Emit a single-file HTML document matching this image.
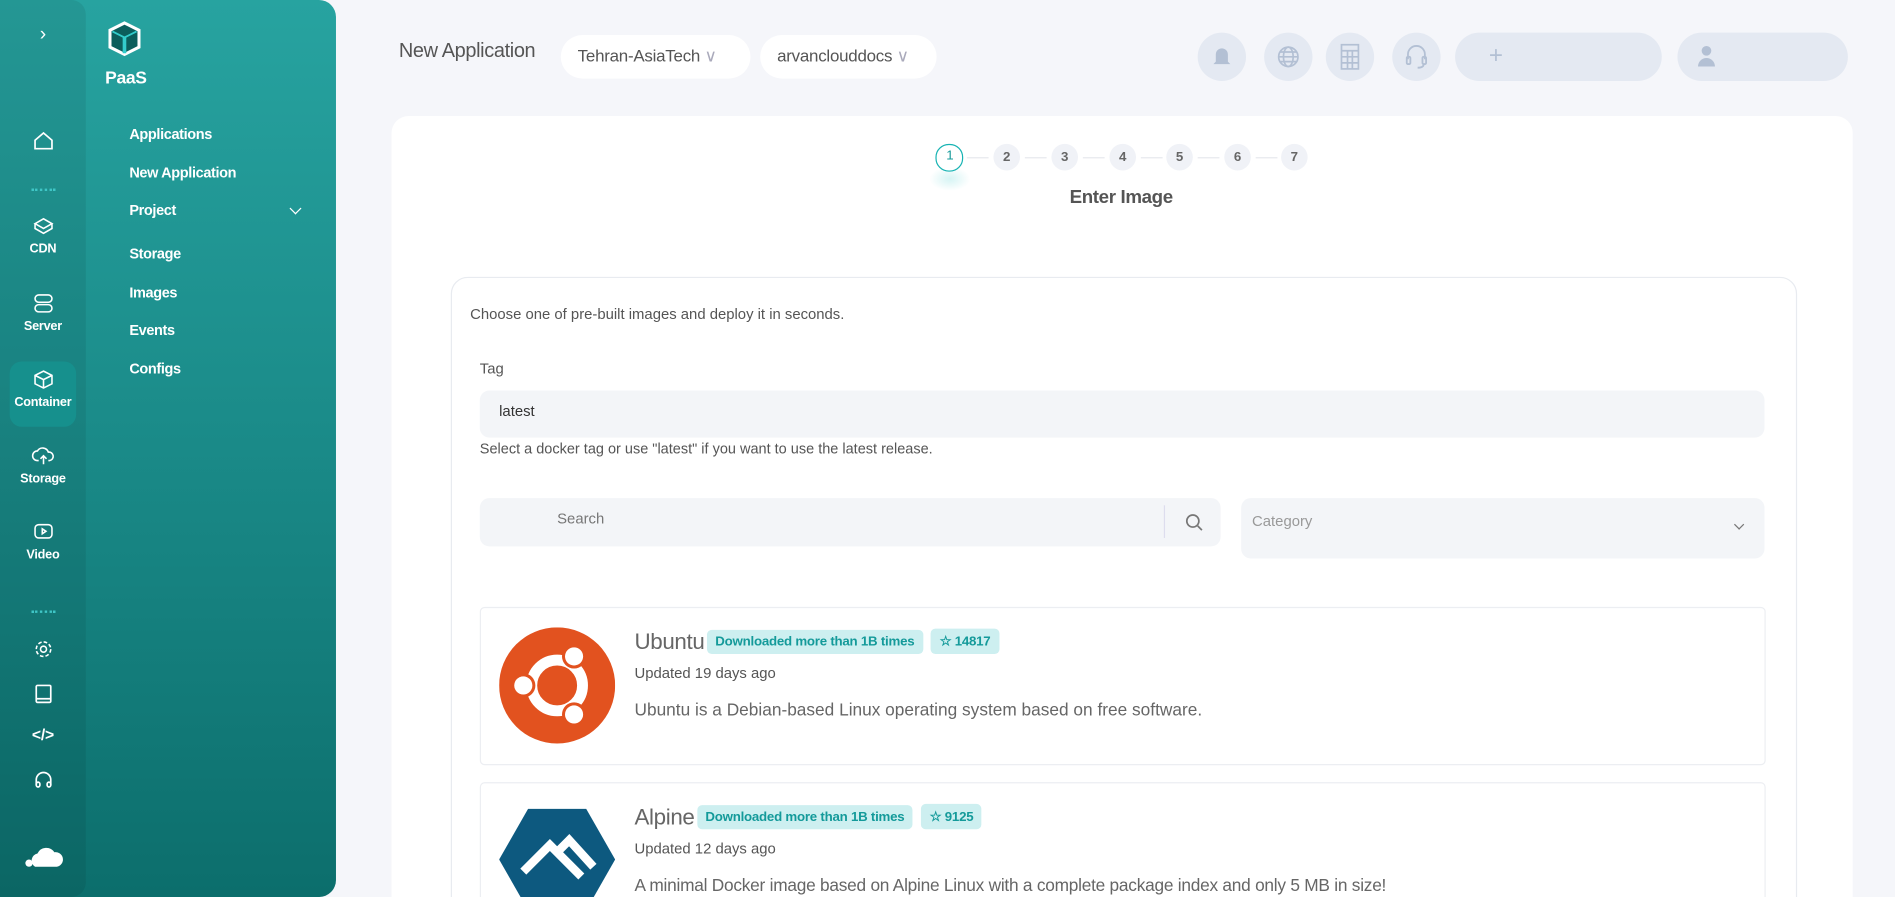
<!DOCTYPE html>
<html><head><meta charset="utf-8"><style>
html,body{margin:0;padding:0;width:1895px;height:897px;overflow:hidden;background:#f5f6fa;font-family:"Liberation Sans",sans-serif}
#w{position:absolute;left:0;top:0;width:1568px;height:742px;overflow:hidden;transform:scale(1.20855,1.2089);transform-origin:0 0;background:#f5f6fa}
.side{position:absolute;left:0;top:0;width:278px;height:742px;border-radius:0 14px 14px 0;background:linear-gradient(180deg,#27a3a0 0%,#1a8a88 50%,#0c6e6c 100%)}
.rail{position:absolute;left:0;top:0;width:71px;height:742px;background:rgba(0,0,0,0.07);border-radius:0 12px 12px 0}
.ri{position:absolute;left:0;width:71px;text-align:center;color:#fff;font-size:10.5px;font-weight:bold;letter-spacing:-0.2px}
.ri svg{display:block;margin:0 auto 4px}
.menu{position:absolute;left:107px;color:#fff;font-size:12px;font-weight:bold;letter-spacing:-0.3px}
.dots{position:absolute;left:26px;width:20px;border-top:2px dotted #3fc6c6}
.pill{position:absolute;background:#fff;border-radius:18px;height:36px;top:29px;font-size:14px;color:#555;line-height:34px;padding-left:14px;box-sizing:border-box;letter-spacing:-0.2px}
.ic{position:absolute;top:27px;width:40px;height:40px;border-radius:20px;background:#e4e9f2}
.card{position:absolute;left:324px;top:96px;width:1209px;height:660px;background:#fff;border-radius:14px}
.st{position:absolute;top:119px;width:22px;height:22px;border-radius:11px;background:#f0f2f7;font-size:11px;color:#666;text-align:center;line-height:22px;font-weight:bold}
.ln{position:absolute;top:130px;width:18px;border-top:1px solid #e6e8ee}
.in{position:absolute;left:373px;top:229px;width:1112px;height:530px;border:1px solid #e8ebf0;border-radius:14px}
.t{position:absolute;font-size:12.3px;color:#555}
.item{position:absolute;left:397px;width:1062px;border:1px solid #eceef2;border-radius:4px;background:#fff}
.badge{display:inline-block;background:#cdeff0;color:#149a9a;font-size:11px;font-weight:bold;padding:4px 7px;border-radius:4px;vertical-align:3px;margin-left:2px;letter-spacing:-0.2px}
</style></head><body><div id="w">
<div class="side"><div class="rail"></div>
<div class="ri" style="top:20px;font-size:16px;font-weight:normal">&#x203A;</div>
<div class="ri" style="top:107px"><svg width="18" height="18" viewBox="0 0 18 18" fill="none" stroke="#fff" stroke-width="1.4"><path d="M2 9L9 3l7 6v7H2z"/></svg></div>
<div class="dots" style="top:156px"></div>
<div class="ri" style="top:178px"><svg width="20" height="18" viewBox="0 0 20 18" fill="none" stroke="#fff" stroke-width="1.3"><path d="M3 7l7-4 7 4-7 4z M3 7v4l7 4 7-4V7"/></svg>CDN</div>
<div class="ri" style="top:242px"><svg width="18" height="18" viewBox="0 0 18 18" fill="none" stroke="#fff" stroke-width="1.3"><rect x="2" y="2" width="14" height="6" rx="3"/><rect x="2" y="10" width="14" height="6" rx="3"/></svg>Server</div>
<div style="position:absolute;left:8px;top:299px;width:55px;height:54px;border-radius:10px;background:#16908d"></div>
<div class="ri" style="top:305px"><svg width="18" height="18" viewBox="0 0 18 18" fill="none" stroke="#fff" stroke-width="1.3"><path d="M9 2l7 3.5v7L9 16l-7-3.5v-7z M2 5.5L9 9l7-3.5 M9 9v7"/></svg>Container</div>
<div class="ri" style="top:368px"><svg width="20" height="18" viewBox="0 0 20 18" fill="none" stroke="#fff" stroke-width="1.3"><path d="M6 13H5a4 4 0 010-8 5 5 0 019 1 3.5 3.5 0 011 7h-1 M10 16V9 M7.5 11.5L10 9l2.5 2.5"/></svg>Storage</div>
<div class="ri" style="top:431px"><svg width="18" height="18" viewBox="0 0 18 18" fill="none" stroke="#fff" stroke-width="1.3"><rect x="2" y="3" width="14" height="11" rx="3"/><path d="M8 6.5v4l3-2z"/></svg>Video</div>
<div class="dots" style="top:505px"></div>
<div class="ri" style="top:528px"><svg width="18" height="18" viewBox="0 0 18 18" fill="none" stroke="#fff" stroke-width="1.3"><circle cx="9" cy="9" r="2.5"/><circle cx="9" cy="9" r="6" stroke-dasharray="3 1.7"/></svg></div>
<div class="ri" style="top:565px"><svg width="18" height="18" viewBox="0 0 18 18" fill="none" stroke="#fff" stroke-width="1.4"><rect x="3" y="2" width="12" height="14" rx="1"/><path d="M3 13h12"/></svg></div>
<div class="ri" style="top:600px;font-size:13px">&lt;/&gt;</div>
<div class="ri" style="top:636px"><svg width="18" height="18" viewBox="0 0 18 18" fill="none" stroke="#fff" stroke-width="1.4"><path d="M3 13V9a6 6 0 0112 0v4"/><rect x="3" y="11" width="3" height="4" rx="1.5"/><rect x="12" y="11" width="3" height="4" rx="1.5"/></svg></div>
<div class="ri" style="top:696px"><svg width="34" height="24" viewBox="0 0 34 24"><circle cx="5" cy="18" r="3" fill="#fff"/><path d="M10 21a6 6 0 012-11 8 8 0 0114-1 6 6 0 012 12z" fill="#fff"/></svg></div>
<svg style="position:absolute;left:89px;top:17px" width="28" height="30" viewBox="0 0 28 30"><path d="M14 2l12 6v14l-12 6-12-6V8z" fill="#0c5e5c" stroke="#fff" stroke-width="2.5"/><path d="M4 9l10 5 10-5" fill="none" stroke="#3cc" stroke-width="1.5"/><path d="M14 14v13" stroke="#3cc" stroke-width="3"/></svg>
<div class="menu" style="left:87px;top:57px;font-size:14.5px">PaaS</div>
<div class="menu" style="top:104px">Applications</div>
<div class="menu" style="top:136px">New Application</div>
<div class="menu" style="top:167px">Project</div>
<div style="position:absolute;left:241px;top:169px;width:6px;height:6px;border-right:1px solid #fff;border-bottom:1px solid #fff;transform:rotate(45deg)"></div>
<div class="menu" style="top:203px">Storage</div>
<div class="menu" style="top:235px">Images</div>
<div class="menu" style="top:266px">Events</div>
<div class="menu" style="top:298px">Configs</div>
</div>
<div style="position:absolute;left:330px;top:33px;font-size:16.5px;color:#555;letter-spacing:-0.3px">New Application</div>
<div class="pill" style="left:464px;width:157px">Tehran-AsiaTech <span style="color:#aab">&#x2228;</span></div>
<div class="pill" style="left:629px;width:146px">arvanclouddocs <span style="color:#aab">&#x2228;</span></div>
<div class="ic" style="left:991px"></div><div class="ic" style="left:1046px"></div><div class="ic" style="left:1097px"></div><div class="ic" style="left:1152px"></div>
<svg style="position:absolute;left:1003px;top:37px" width="16" height="20" viewBox="0 0 16 20"><path d="M3 14V8a5 5 0 0110 0v6l2 2H1z M7 17h2" fill="#b3c0d4"/></svg>
<svg style="position:absolute;left:1056px;top:37px" width="20" height="20" viewBox="0 0 20 20" fill="none" stroke="#b3c0d4" stroke-width="1.4"><circle cx="10" cy="10" r="8"/><ellipse cx="10" cy="10" rx="4" ry="8"/><path d="M2 10h16M3 6h14M3 14h14"/></svg>
<svg style="position:absolute;left:1109px;top:36px" width="16" height="22" viewBox="0 0 16 22" fill="none" stroke="#b3c0d4" stroke-width="1.4"><rect x="1" y="1" width="14" height="20"/><path d="M1 6h14M1 11h14M1 16h14M6 6v15M10 6v15"/></svg>
<svg style="position:absolute;left:1162px;top:36px" width="20" height="22" viewBox="0 0 20 22" fill="none" stroke="#b3c0d4" stroke-width="1.5"><path d="M3 13V9a7 7 0 0114 0v4"/><rect x="2" y="11" width="3" height="6" rx="1"/><rect x="15" y="11" width="3" height="6" rx="1"/><path d="M16 17q0 3-5 3"/></svg>
<div style="position:absolute;left:1204px;top:27px;width:171px;height:40px;border-radius:20px;background:#e4e9f2;color:#b3c0d4;font-size:20px;line-height:38px;padding-left:28px;box-sizing:border-box">+</div>
<div style="position:absolute;left:1388px;top:27px;width:141px;height:40px;border-radius:20px;background:#e4e9f2"></div>
<svg style="position:absolute;left:1403px;top:36px" width="18" height="20" viewBox="0 0 18 20"><circle cx="9" cy="6" r="4" fill="#b3c0d4"/><path d="M2 19a7 7 0 0114 0z" fill="#b3c0d4"/></svg>
<div class="card"></div>
<div style="position:absolute;left:769px;top:138px;width:34px;height:20px;border-radius:50%;background:radial-gradient(#d6f4f4,transparent 70%)"></div>
<div class="st" style="left:774px;background:#fff;border:1.5px solid #17b3b3;width:21px;height:21px;top:119px"></div>
<div style="position:absolute;left:775px;top:123px;width:22px;text-align:center;font-size:11px;color:#149a9a">1</div>
<div class="ln" style="left:800px"></div><div class="st" style="left:822px">2</div>
<div class="ln" style="left:848px"></div><div class="st" style="left:870px">3</div>
<div class="ln" style="left:896px"></div><div class="st" style="left:918px">4</div>
<div class="ln" style="left:944px"></div><div class="st" style="left:965px">5</div>
<div class="ln" style="left:991px"></div><div class="st" style="left:1013px">6</div>
<div class="ln" style="left:1039px"></div><div class="st" style="left:1060px">7</div>
<div style="position:absolute;left:885px;top:155px;font-size:15.5px;font-weight:bold;color:#555;letter-spacing:-0.3px">Enter Image</div>
<div class="in"></div>
<div class="t" style="left:389px;top:253px">Choose one of pre-built images and deploy it in seconds.</div>
<div class="t" style="left:397px;top:298px">Tag</div>
<div style="position:absolute;left:397px;top:323px;width:1063px;height:39px;border-radius:8px;background:#f3f5f8"></div>
<div class="t" style="left:413px;top:333px;color:#333">latest</div>
<div class="t" style="left:397px;top:364px;font-size:12px">Select a docker tag or use "latest" if you want to use the latest release.</div>
<div style="position:absolute;left:397px;top:412px;width:613px;height:40px;border-radius:8px;background:#f3f5f8"></div>
<div class="t" style="left:461px;top:422px;color:#777">Search</div>
<div style="position:absolute;left:963px;top:418px;height:27px;border-left:1px solid #dde"></div>
<svg style="position:absolute;left:980px;top:424px" width="16" height="16" viewBox="0 0 16 16" fill="none" stroke="#777" stroke-width="1.4"><circle cx="7" cy="7" r="5"/><path d="M11 11l3.5 3.5"/></svg>
<div style="position:absolute;left:1027px;top:412px;width:433px;height:50px;border-radius:8px;background:#f3f5f8"></div>
<div class="t" style="left:1036px;top:424px;color:#999">Category</div>
<div style="position:absolute;left:1436px;top:431px;width:5px;height:5px;border-right:1.5px solid #777;border-bottom:1.5px solid #777;transform:rotate(45deg)"></div>
<div class="item" style="top:502px;height:129px"></div>
<svg style="position:absolute;left:413px;top:519px" width="96" height="96" viewBox="0 0 96 96"><circle cx="48" cy="48" r="48" fill="#e2521f"/><circle cx="48" cy="48" r="21" fill="none" stroke="#fff" stroke-width="9"/><circle cx="20" cy="48" r="10" fill="#e2521f"/><circle cx="20" cy="48" r="7.5" fill="#fff"/><circle cx="62" cy="24" r="10" fill="#e2521f"/><circle cx="62" cy="24" r="7.5" fill="#fff"/><circle cx="62" cy="72" r="10" fill="#e2521f"/><circle cx="62" cy="72" r="7.5" fill="#fff"/></svg>
<div style="position:absolute;left:525px;top:520px;font-size:18.5px;color:#666;letter-spacing:-0.3px">Ubuntu<span class="badge">Downloaded more than 1B times</span> <span class="badge">&#9734; 14817</span></div>
<div class="t" style="left:525px;top:550px">Updated 19 days ago</div>
<div class="t" style="left:525px;top:580px;font-size:14.3px;color:#666">Ubuntu is a Debian-based Linux operating system based on free software.</div>
<div class="item" style="top:647px;height:120px"></div>
<svg style="position:absolute;left:413px;top:669px" width="96" height="80" viewBox="0 0 96 80"><path d="M24 0h48l24 42-24 42H24L0 42z" fill="#0d597f"/><path d="M20 52l22-22 26 26M48 36l10-10 20 22" fill="none" stroke="#fff" stroke-width="7"/></svg>
<div style="position:absolute;left:525px;top:665px;font-size:18.5px;color:#666;letter-spacing:-0.3px">Alpine<span class="badge">Downloaded more than 1B times</span> <span class="badge">&#9734; 9125</span></div>
<div class="t" style="left:525px;top:695px">Updated 12 days ago</div>
<div class="t" style="left:525px;top:725px;font-size:14.3px;color:#666;letter-spacing:-0.2px">A minimal Docker image based on Alpine Linux with a complete package index and only 5 MB in size!</div>
</div></body></html>
